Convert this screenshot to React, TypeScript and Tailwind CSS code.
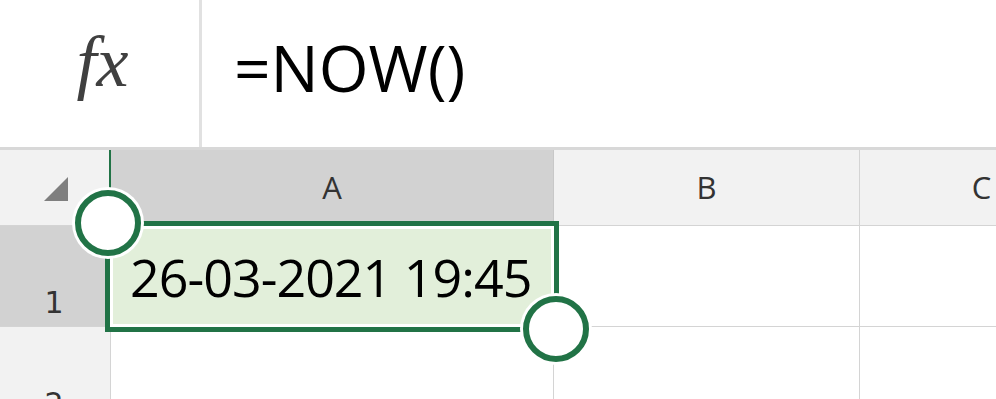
const green = "border-[#217346]";

function Handle({ className }: { className: string }) {
  return (
    <div className={`absolute w-[72px] h-[72px] rounded-full bg-white p-[3px] ${className}`}>
      <div className={`w-full h-full rounded-full bg-white border-[6px] ${green}`} />
    </div>
  );
}

export default function App() {
  const hdr = "font-['Open_Sans',sans-serif] text-[31px] leading-none text-[#333333]";
  const rowNum = "font-['DejaVu_Sans',sans-serif] text-[30px] leading-none text-[#333333]";

  return (
    <div className="w-[996px] h-[399px] bg-white overflow-hidden flex flex-col">
      {/* formula bar */}
      <div className="h-[150px] shrink-0 flex border-b-[3px] border-[#d8d8d8]">
        <div className="w-[199px] flex justify-center pt-[26px] pl-[6px] font-['Liberation_Serif',serif] italic text-[72px] leading-none text-[#404040]">
          <span>fx</span>
        </div>
        <div className="w-[3px] bg-[#e1e1e1]" />
        <div className="flex-1 pl-[32px] pt-[36px] font-['Open_Sans',sans-serif] text-[64px] leading-none text-black">
          =NOW()
        </div>
      </div>

      {/* grid */}
      <div className="relative flex-1 overflow-hidden">
        <div className="grid grid-cols-[111px_443px_306px_243px] grid-rows-[76px_101px_80px] w-max">
          {/* header row */}
          <div className="bg-[#f2f2f2] border-r-2 border-r-[#217346] border-b border-b-[#d4d4d4] flex justify-end items-end pr-[41px] pb-[24px]">
            <svg width="24" height="24" viewBox="0 0 24 24">
              <polygon points="24,0 24,24 0,24" fill="#7f7f7f" />
            </svg>
          </div>
          <div className={`bg-[#d2d2d2] border-r border-b border-[#c8c8c8] flex items-center justify-center ${hdr}`}>A</div>
          <div className={`bg-[#f2f2f2] border-r border-b border-[#d4d4d4] flex items-center justify-center ${hdr}`}>B</div>
          <div className={`bg-[#f2f2f2] border-b border-[#d4d4d4] flex items-center justify-center ${hdr}`}>C</div>

          {/* row 1 */}
          <div className={`bg-[#d2d2d2] border-r border-b border-[#d4d4d4] flex items-end justify-center pb-[8px] pr-[2px] ${rowNum}`}>1</div>
          <div className="border-r border-b border-[#d4d4d4]" />
          <div className="border-r border-b border-[#d4d4d4]" />
          <div className="border-b border-[#d4d4d4]" />

          {/* row 2 */}
          <div className={`bg-[#f2f2f2] border-r border-[#d4d4d4] flex items-start justify-center pt-[62px] pr-[2px] ${rowNum}`}>2</div>
          <div className="border-r border-[#d4d4d4]" />
          <div className="border-r border-[#d4d4d4]" />
          <div />
        </div>

        {/* selection */}
        <div className={`absolute left-[105px] top-[71px] w-[454px] h-[111px] border-[5px] ${green}`}>
          <div className="w-full h-full border-[3px] border-white bg-[#e2efda] pl-[17px] pt-[22px] whitespace-nowrap font-['Open_Sans',sans-serif] text-[52px] leading-none tracking-[-1px] text-black">
            26-03-2021 19:45
          </div>
        </div>
        <Handle className="left-[72px] top-[37px]" />
        <Handle className="left-[520px] top-[143px]" />
      </div>
    </div>
  );
}
